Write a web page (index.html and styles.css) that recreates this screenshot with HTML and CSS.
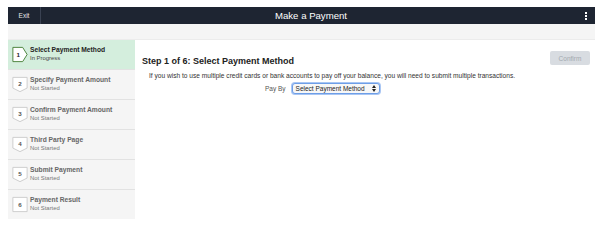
FILE: index.html
```html
<!DOCTYPE html>
<html>
<head>
<meta charset="utf-8">
<link rel="stylesheet" href="styles.css">
</head>
<body>
<div class="page">
  <header class="topbar">
    <div class="exit">Exit</div>
    <div class="title">Make a Payment</div>
    <div class="kebab"><span></span><span></span><span></span></div>
  </header>
  <div class="strip"></div>
  <div class="body">
    <nav class="steps">
      <div class="step active">
        <svg class="badge" viewBox="0 0 18 18" width="18" height="18"><path d="M1 1 H12 L17 9 L12 17 H1 Z" fill="#fff" stroke="#3f7a2e" stroke-width="1"/><text x="7" y="12" text-anchor="middle" class="num">1</text></svg>
        <div class="txt"><div class="name">Select Payment Method</div><div class="status">In Progress</div></div>
      </div>
      <div class="step">
        <svg class="badge" viewBox="0 0 18 18" width="18" height="18"><path d="M1 1 H17 V13 L9 17 L1 13 Z" fill="#fff" stroke="#c9c9c9" stroke-width="1"/><text x="9" y="11" text-anchor="middle" class="num">2</text></svg>
        <div class="txt"><div class="name">Specify Payment Amount</div><div class="status">Not Started</div></div>
      </div>
      <div class="step">
        <svg class="badge" viewBox="0 0 18 18" width="18" height="18"><path d="M1 1 H17 V13 L9 17 L1 13 Z" fill="#fff" stroke="#c9c9c9" stroke-width="1"/><text x="9" y="11" text-anchor="middle" class="num">3</text></svg>
        <div class="txt"><div class="name">Confirm Payment Amount</div><div class="status">Not Started</div></div>
      </div>
      <div class="step">
        <svg class="badge" viewBox="0 0 18 18" width="18" height="18"><path d="M1 1 H17 V13 L9 17 L1 13 Z" fill="#fff" stroke="#c9c9c9" stroke-width="1"/><text x="9" y="11" text-anchor="middle" class="num">4</text></svg>
        <div class="txt"><div class="name">Third Party Page</div><div class="status">Not Started</div></div>
      </div>
      <div class="step">
        <svg class="badge" viewBox="0 0 18 18" width="18" height="18"><path d="M1 1 H17 V13 L9 17 L1 13 Z" fill="#fff" stroke="#c9c9c9" stroke-width="1"/><text x="9" y="11" text-anchor="middle" class="num">5</text></svg>
        <div class="txt"><div class="name">Submit Payment</div><div class="status">Not Started</div></div>
      </div>
      <div class="step last">
        <svg class="badge" viewBox="0 0 18 18" width="18" height="18"><path d="M1 1 H17 V17 H1 Z" fill="#fff" stroke="#c9c9c9" stroke-width="1"/><text x="9" y="12" text-anchor="middle" class="num">6</text></svg>
        <div class="txt"><div class="name">Payment Result</div><div class="status">Not Started</div></div>
      </div>
    </nav>
    <main class="main">
      <div class="head">
        <h1>Step 1 of 6: Select Payment Method</h1>
        <button class="confirm">Confirm</button>
      </div>
      <p class="info">If you wish to use multiple credit cards or bank accounts to pay off your balance, you will need to submit multiple transactions.</p>
      <div class="payby">
        <span class="label">Pay By</span>
        <span class="select">Select Payment Method <svg class="arrows" viewBox="0 0 4 7" width="4" height="7"><path d="M2 0 L4 3 H0 Z M0 4 H4 L2 7 Z" fill="#222"/></svg></span>
      </div>
    </main>
  </div>
</div>
</body>
</html>
```
FILE: styles.css
```css
html, body { margin: 0; padding: 0; background: #fff; }
body { font-family: "Liberation Sans", Arial, sans-serif; color: #333; }
.page { padding: 7px 5px 0 8px; }
.topbar {
  height: 17px; background: #1e2532; display: flex; align-items: center;
  position: relative; color: #fff;
}
.exit {
  width: 32px; height: 17px; border-right: 1px solid #3a4252;
  font-size: 6.5px; display: flex; align-items: center; justify-content: center;
  color: #e6e6e6;
}
.title { flex: 1; text-align: center; font-size: 9.6px; padding-left: 4px; }
.kebab { width: 18px; display: flex; flex-direction: column; align-items: center; gap: 1px; }
.kebab span { width: 2px; height: 2px; background: #fff; }
.strip { height: 15px; background: #f5f5f5; border-bottom: 1px solid #ececec; }
.body { display: flex; }
.steps { width: 127px; background: #f5f5f5; }
.step {
  height: 29px; display: flex; align-items: center; border-bottom: 1px solid #e2e2e2;
  padding-left: 4px; gap: 2px;
}
.step.last { border-bottom: none; }
.step.active { background: #d4eedd; }
.badge { flex: none; width: 16px; height: 17px; }
.num { font-size: 7px; font-weight: bold; fill: #555; font-family: "Liberation Sans", Arial, sans-serif; }
.step.active .num { fill: #222; }
.txt { line-height: 1; }
.name { font-size: 6.7px; font-weight: bold; color: #666; }
.status { font-size: 5.9px; color: #777; margin-top: 2px; }
.step.active .name { color: #222; }
.step.active .status { color: #444; }
.main { flex: 1; padding: 8px 5px 0 7px; }
.head { display: flex; justify-content: space-between; align-items: center; height: 20px; }
h1 { margin: 5px 0 0; font-size: 9px; font-weight: bold; color: #222; }
.confirm {
  width: 40px; height: 14px; background: #d8dce1; border: none; border-radius: 2px;
  color: #a3a9b0; font-size: 6.5px; font-family: "Liberation Sans", Arial, sans-serif; padding: 0;
}
.info { margin: 4px 0 0 7px; font-size: 6.6px; color: #333; }
.payby { display: flex; align-items: center; margin-top: 4px; padding-left: 123px; gap: 6px; }
.label { font-size: 6.5px; color: #555; }
.select {
  display: inline-flex; align-items: center; justify-content: space-between;
  width: 80px; height: 9px; padding: 0 3px; border: 1px solid #6d9ee8; border-radius: 3px;
  box-shadow: 0 0 0 1px #a9c6f3; font-size: 6.5px; color: #222; background: #f7f7f7;
}
.arrows { flex: none; }
```
